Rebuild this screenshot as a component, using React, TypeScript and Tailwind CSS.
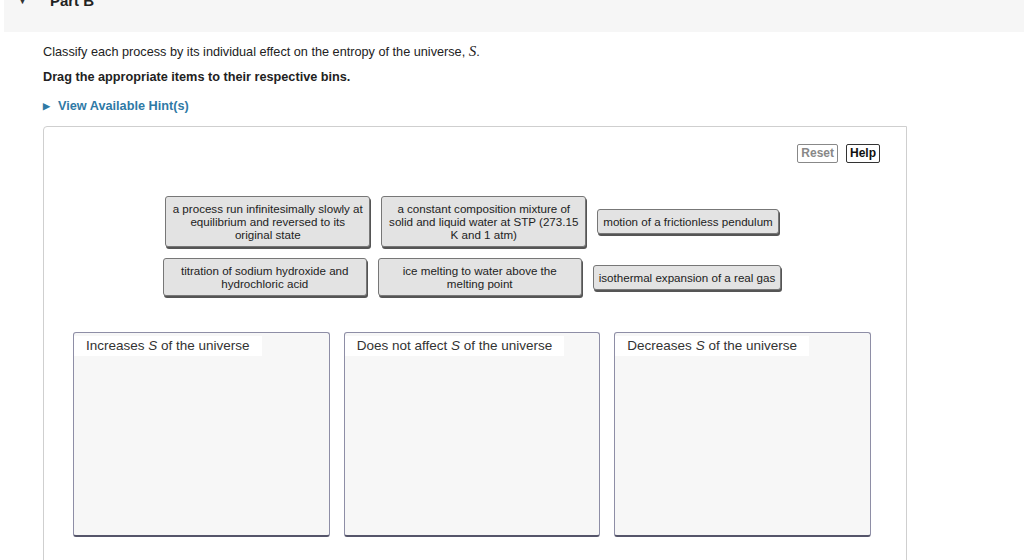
import React from 'react';

type Item = { text: string; w?: string };

const rowOne: Item[] = [
  { text: 'a process run infinitesimally slowly at equilibrium and reversed to its original state', w: 'w-[205px]' },
  { text: 'a constant composition mixture of solid and liquid water at STP (273.15 K and 1 atm)', w: 'w-[205px]' },
  { text: 'motion of a frictionless pendulum' },
];

const rowTwo: Item[] = [
  { text: 'titration of sodium hydroxide and hydrochloric acid', w: 'w-[204px]' },
  { text: 'ice melting to water above the melting point', w: 'w-[204px]' },
  { text: 'isothermal expansion of a real gas' },
];

const bins = ['Increases', 'Does not affect', 'Decreases'];

function DragItem({ item }: { item: Item }) {
  return (
    <div
      className={`${item.w ?? ''} rounded-[3px] border border-[#777] bg-[#e3e3e3] px-[5px] py-[5px] text-center text-[11.6px] leading-[13px] text-[#222] shadow-[1px_2px_0_#555]`}
    >
      {item.text}
    </div>
  );
}

function Bin({ label }: { label: string }) {
  return (
    <div className="h-[205px] rounded-[3px] border border-[#8e8ea6] border-b-2 border-b-[#55556a] bg-[#f7f7f7]">
      <div className="inline-block bg-white px-[12px] pt-[2px] pb-[3px] text-[13.5px] leading-[15px] text-[#333]">
        {label} <span className="italic">S</span> of the universe
      </div>
    </div>
  );
}

export default function App() {
  return (
    <div className="relative h-[560px] w-[1024px] overflow-hidden bg-white font-['Liberation_Sans',Arial,sans-serif]">
      {/* part header */}
      <div className="ml-[4px] flex h-[32px] items-start bg-[#f6f6f6]">
        <span className="ml-[14px] mt-[-5px] text-[9px] text-[#333]">▼</span>
        <span className="ml-[23px] mt-[-10px] text-[15px] font-bold text-[#222]">Part B</span>
      </div>

      <div className="pl-[43px]">
        <p className="mt-[12px] text-[12.7px] leading-[15px] text-[#222]">
          Classify each process by its individual effect on the entropy of the universe,{' '}
          <span className="font-['Liberation_Serif',serif] text-[15px] italic">S</span>.
        </p>
        <p className="mt-[10px] text-[12.7px] font-bold leading-[15px] text-[#222]">
          Drag the appropriate items to their respective bins.
        </p>
        <div className="mt-[14px] flex items-center text-[12.7px] font-bold leading-[15px] text-[#2f7aa6]">
          <span className="mr-[8px] text-[9px]">▶</span>
          View Available Hint(s)
        </div>

        <div className="mt-[12px] h-[460px] w-[864px] rounded-tl-[4px] border border-[#cfcfcf]">
          <div className="flex justify-end gap-[8px] pr-[26px] pt-[17px]">
            <button className="rounded-[2px] border border-[#888] bg-white px-[3px] py-px text-[12px] font-bold leading-[15px] text-[#888]">
              Reset
            </button>
            <button className="rounded-[2px] border border-[#333] bg-white px-[3px] py-px text-[12px] font-bold leading-[15px] text-[#111]">
              Help
            </button>
          </div>

          <div className="mt-[33px] flex flex-col items-center gap-[11px] pr-[6px]">
            <div className="flex items-center gap-[11px]">
              {rowOne.map((it) => (
                <DragItem key={it.text} item={it} />
              ))}
            </div>
            <div className="flex items-center gap-[11px]">
              {rowTwo.map((it) => (
                <DragItem key={it.text} item={it} />
              ))}
            </div>
          </div>

          <div className="ml-[29px] mt-[36px] grid w-[798px] grid-cols-3 gap-[14px]">
            {bins.map((b) => (
              <Bin key={b} label={b} />
            ))}
          </div>
        </div>
      </div>
    </div>
  );
}
